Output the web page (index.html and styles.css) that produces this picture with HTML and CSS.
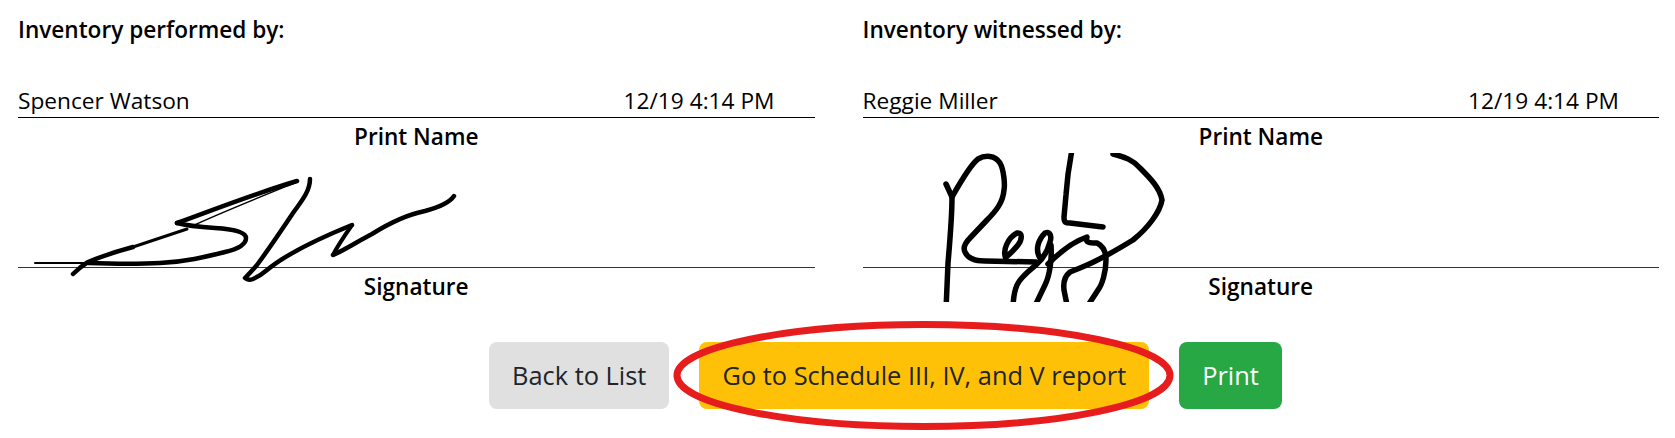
FILE: index.html
```html
<!DOCTYPE html>
<html lang="en">
<head>
  <meta charset="UTF-8">
  <meta name="viewport" content="width=device-width, initial-scale=1.0">
  <title>Inventory sign-off</title>
  <link rel="stylesheet" href="styles.css">
</head>
<body>
  <div class="container">
    <div class="signoff-row">
      <!-- Performed by -->
      <div class="signoff">
        <h2>Inventory performed by:</h2>
        <div class="name-line">
          <span>Spencer Watson</span>
          <span>12/19 4:14 PM</span>
        </div>
        <div class="caption">Print Name</div>
        <div class="signature-box">
          <svg class="signature" width="797" height="149" viewBox="18 153 797 149" fill="none" stroke="#000" stroke-linecap="round" stroke-linejoin="round">
            <path stroke-width="2" d="M35 263 L87 263"/>
            <path stroke-width="4.5" d="M73 274 C78 269 83 265 88 262 C105 255 118 251 133 247"/>
            <path stroke-width="3" d="M133 247 L187 229"/>
            <path stroke-width="4.5" d="M88 263 C120 264 140 264 160 263 C185 262 205 257 225 252 C238 249 246 245 246 238 C246 232 233 229 215 228 C200 227 188 226 177 223"/>
            <path stroke-width="4.5" d="M177 223 C200 215 250 195 297 181"/>
            <path stroke-width="1.5" d="M190 227 C220 213 265 195 297 182"/>
            <path stroke-width="4.5" d="M310 179 C310 192 300 203 293 213 C283 228 268 250 257 265 Q251 272 245 278 Q248 281 253 279 Q260 276 267 270 C285 255 320 238 352 225"/>
            <path stroke-width="4" d="M352 225 C345 235 338 245 333 255"/>
            <path stroke-width="4.5" d="M333 255 C345 250 360 240 372 234 C388 224 405 215 425 211 C440 207 450 202 454 196"/>
          </svg>
        </div>
        <div class="caption">Signature</div>
      </div>

      <!-- Witnessed by -->
      <div class="signoff">
        <h2>Inventory witnessed by:</h2>
        <div class="name-line">
          <span>Reggie Miller</span>
          <span>12/19 4:14 PM</span>
        </div>
        <div class="caption">Print Name</div>
        <div class="signature-box">
          <svg class="signature" width="797" height="149" viewBox="863 153 797 149" fill="none" stroke="#000" stroke-width="5.5" stroke-linecap="round" stroke-linejoin="round">
            <path d="M946 184 L952 197 C952 215 950 240 948 263 L946 310"/>
            <path d="M952 197 C960 183 970 165 978 159 C985 155 995 155 1000 163 C1004 170 1005 185 1004 190 C1003 203 995 212 987 220 L970 238 C965 243 963 248 965 252 C968 259 975 261 985 261 L1036 262"/>
            <path d="M1006 259 C1002 250 1008 238 1017 233 C1023 232 1022 240 1018 245 C1014 250 1010 254 1006 257"/>
            <path d="M1040 258 C1035 250 1038 240 1045 233 C1050 231 1052 236 1050 242 C1048 250 1044 258 1036 265 C1030 270 1020 278 1017 285 C1014 292 1013 300 1013 310"/>
            <path d="M1051 245 C1052 258 1050 275 1045 285 L1033 310"/>
            <path d="M1048 264 C1060 252 1075 241 1087 237 C1085 243 1090 243 1097 243 C1103 246 1106 252 1106 260 C1106 272 1102 285 1098 290 L1085 310"/>
            <path d="M1113 154 C1125 157 1133 160 1140 168 C1150 178 1160 188 1162 200 C1160 212 1148 228 1133 240 C1120 248 1095 262 1080 268 L1070 272 C1065 276 1063 282 1064 290 L1068 310"/>
            <path d="M1072 150 C1069 165 1067 180 1066 195 L1064 217 C1064 223 1066 223 1070 223 L1103 227"/>
          </svg>
        </div>
        <div class="caption">Signature</div>
      </div>
    </div>

    <div class="actions">
      <a class="btn btn-light" href="#">Back to List</a>
      <span class="highlight">
        <a class="btn btn-warning" href="#">Go to Schedule III, IV, and V report</a>
        <svg class="ring" width="501" height="109" viewBox="0 0 501 109" fill="none">
          <ellipse cx="250.5" cy="54.5" rx="246.5" ry="51" stroke="#e71c1c" stroke-width="7"/>
        </svg>
      </span>
      <a class="btn btn-success" href="#">Print</a>
    </div>
  </div>
</body>
</html>
```

FILE: styles.css
```css
* {
  box-sizing: border-box;
}

body {
  background-color: #ffffff;
  color: #000;
  font-family: 'Open Sans', 'Noto Sans', sans-serif;
  margin: 0;
}

.container {
  height: 438px;
  padding: 13px 16px 0 18px;
}

.signoff-row {
  display: flex;
  gap: 48px;
}

.signoff {
  width: 797px;
}

h2 {
  font-size: 22.6px;
  font-weight: 600;
  line-height: 34px;
  margin: 0 0 37px 0;
}

.name-line {
  display: flex;
  justify-content: space-between;
  font-size: 22.7px;
  line-height: 33px;
  padding-right: 40px;
  border-bottom: 1px solid #000;
}

.caption {
  font-size: 22.6px;
  font-weight: 600;
  line-height: 34px;
  padding-top: 2px;
  height: 36px;
  text-align: center;
}

.signature-box {
  height: 114px;
  border-bottom: 1px solid #333;
  position: relative;
}

.signature {
  position: absolute;
  left: 0;
  top: -1px;
}

.actions {
  display: flex;
  justify-content: center;
  gap: 30px;
  margin-top: 38px;
  margin-left: 94px;
}

.btn {
  display: block;
  height: 67px;
  line-height: 67px;
  padding: 0 23px;
  font-size: 25.4px;
  border-radius: 8px;
  text-decoration: none;
  color: #212529;
}

.btn-light {
  background-color: #e0e0e0;
}

.btn-warning {
  background-color: #ffc107;
}

.btn-success {
  background-color: #28a745;
  color: #fff;
}

.highlight {
  position: relative;
  display: block;
}

.ring {
  position: absolute;
  left: -26px;
  top: -21px;
}
```
